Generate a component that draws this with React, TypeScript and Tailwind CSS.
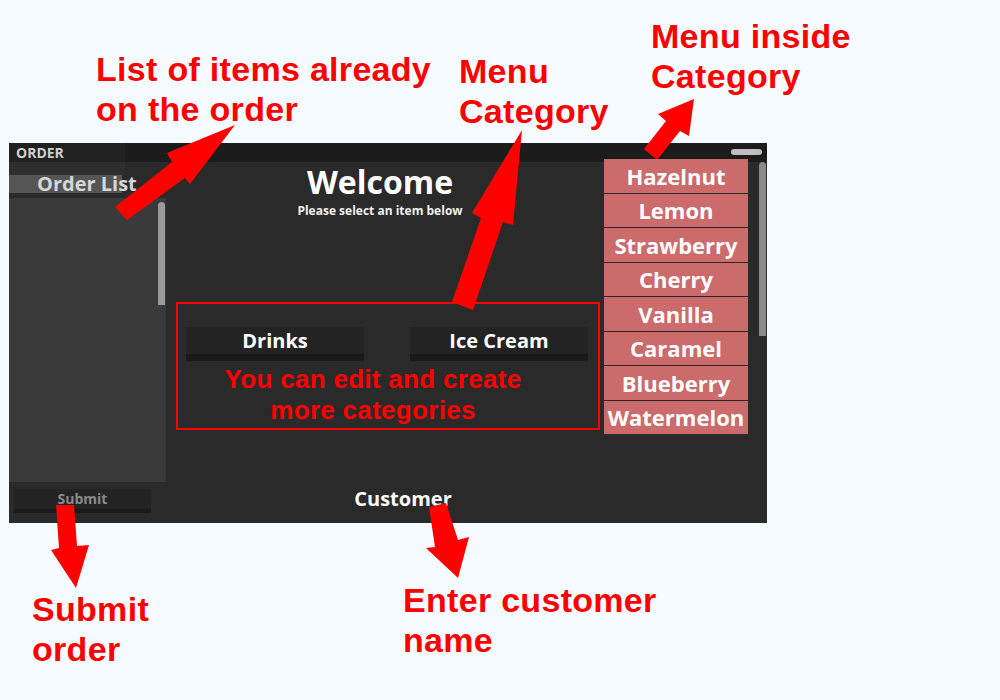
import React from "react";

const flavours = [
  "Hazelnut",
  "Lemon",
  "Strawberry",
  "Cherry",
  "Vanilla",
  "Caramel",
  "Blueberry",
  "Watermelon",
];

const categories = ["Drinks", "Ice Cream"];

// thick red pointer arrows drawn over the panel
const arrows = [
  "115,207 172,162 167,153 235,125 190,184 185,178 127,220",
  "452,302 481,218 472,213 522,130 513,225 503,222 473,310",
  "644,149 666,121 658,114 694,99 689,136 680,131 657,160",
  "56,505 59,548 51,550 76,588 89,545 77,546 74,505",
  "429,507 435,547 426,548 458,578 469,537 458,540 446,503",
];

const notes = [
  { left: 96, top: 49, lines: ["List of items already", "on the order"] },
  { left: 459, top: 51, lines: ["Menu", "Category"] },
  { left: 651, top: 16, lines: ["Menu inside", "Category"] },
  { left: 32, top: 589, lines: ["Submit", "order"] },
  { left: 403, top: 580, lines: ["Enter customer", "name"] },
];

function CategoryButton({ label }: { label: string }) {
  return (
    <div className="w-[178px] h-[34px] flex flex-col bg-[#232323]">
      <div className="flex-1 flex items-center justify-center text-[20px] leading-[26px] font-bold text-white">
        {label}
      </div>
      <div className="h-[7px] bg-[#1a1a1a]" />
    </div>
  );
}

export default function App() {
  return (
    <div className="relative w-[1000px] h-[700px] bg-[#f5fbff] font-['Open_Sans',sans-serif] overflow-hidden">
      <div className="pt-[143px] pl-[9px]">
        <div className="w-[758px] h-[380px] flex flex-col bg-[#2a2a2a]">
          {/* title bar */}
          <div className="h-[19px] flex bg-[#1c1c1c] relative z-0">
            <div className="w-[116px] bg-[#212121] pl-[7px] text-[14px] leading-[19px] font-bold text-[#cfcfcf]">
              ORDER
            </div>
            <div className="flex-1 flex justify-end pt-[6px] pr-[5px]">
              <div className="w-[31px] h-[6px] rounded-full bg-[#bfbfbf]" />
            </div>
          </div>

          <div className="flex-1 flex">
            {/* order list */}
            <div className="w-[157px] flex flex-col">
              <div className="h-[13px] w-[116px] bg-[#2e2e2e]" />
              <div className="h-[18px] w-[113px] bg-[#555555]">
                <div className="pl-[28px] whitespace-nowrap text-[20px] leading-[18px] font-bold text-[#d6d6d6]">
                  Order List
                </div>
              </div>
              <div className="h-[5px]" />
              <div className="h-[284px] bg-[#3a3a3a] flex justify-end pt-[4px] pr-[1px]">
                <div className="w-[7px] h-[103px] rounded-t-[4px] bg-[#9a9a9a]" />
              </div>
              <div className="mt-[7px] ml-[5px] w-[137px] h-[24px] flex flex-col bg-[#232323]">
                <div className="flex-1 flex items-center justify-center text-[14px] leading-[18px] font-bold text-[#8a8a8a]">
                  Submit
                </div>
                <div className="h-[4px] bg-[#1a1a1a]" />
              </div>
            </div>

            {/* welcome and categories */}
            <div className="flex-1 flex flex-col">
              <div className="mt-[2px] pr-[10px] text-center text-[32px] leading-[36px] font-bold text-white">
                Welcome
              </div>
              <div className="mt-[4px] pr-[10px] text-center text-[12px] leading-[14px] font-bold text-[#f0f0f0]">
                Please select an item below
              </div>
              <div className="mt-[84px] ml-[10px] w-[424px] border-2 border-[#ff0000] pt-[23px] pl-[8px] pr-[10px] pb-[2px]">
                <div className="flex justify-between">
                  {categories.map((c) => (
                    <CategoryButton key={c} label={c} />
                  ))}
                </div>
                <div className="mt-[3px] pr-[28px] text-center text-[26px] leading-[31px] tracking-[0.3px] font-bold text-[#ff0000] font-['Liberation_Sans',Arial,sans-serif]">
                  You can edit and create
                  <br />
                  more categories
                </div>
              </div>
              <div className="mt-auto mb-[12px] pl-[36px] text-center text-[20px] leading-[24px] font-bold text-white">
                Customer
              </div>
            </div>

            {/* flavours */}
            <div className="w-[144px] -mt-[3px] flex flex-col gap-px relative z-10">
              {flavours.map((f) => (
                <div
                  key={f}
                  className="h-[33.5px] flex items-center justify-center bg-[#cc6b6b] text-[22px] leading-[26px] font-bold text-white"
                >
                  {f}
                </div>
              ))}
            </div>
            <div className="ml-[11px] mr-[1px] w-[7px]">
              <div className="h-[174px] rounded-t-[4px] bg-[#8a8a8a]" />
            </div>
          </div>
        </div>
      </div>

      {notes.map((n) => (
        <div
          key={n.lines[0]}
          className="absolute text-[34px] leading-[40px] tracking-[0.3px] font-bold text-[#ff0000] whitespace-nowrap font-['Liberation_Sans',Arial,sans-serif]"
          style={{ left: n.left, top: n.top }}
        >
          {n.lines[0]}
          <br />
          {n.lines[1]}
        </div>
      ))}

      <svg
        className="absolute inset-0 pointer-events-none"
        width="1000"
        height="700"
        viewBox="0 0 1000 700"
      >
        {arrows.map((p) => (
          <polygon key={p} points={p} fill="#ff0000" />
        ))}
      </svg>
    </div>
  );
}
